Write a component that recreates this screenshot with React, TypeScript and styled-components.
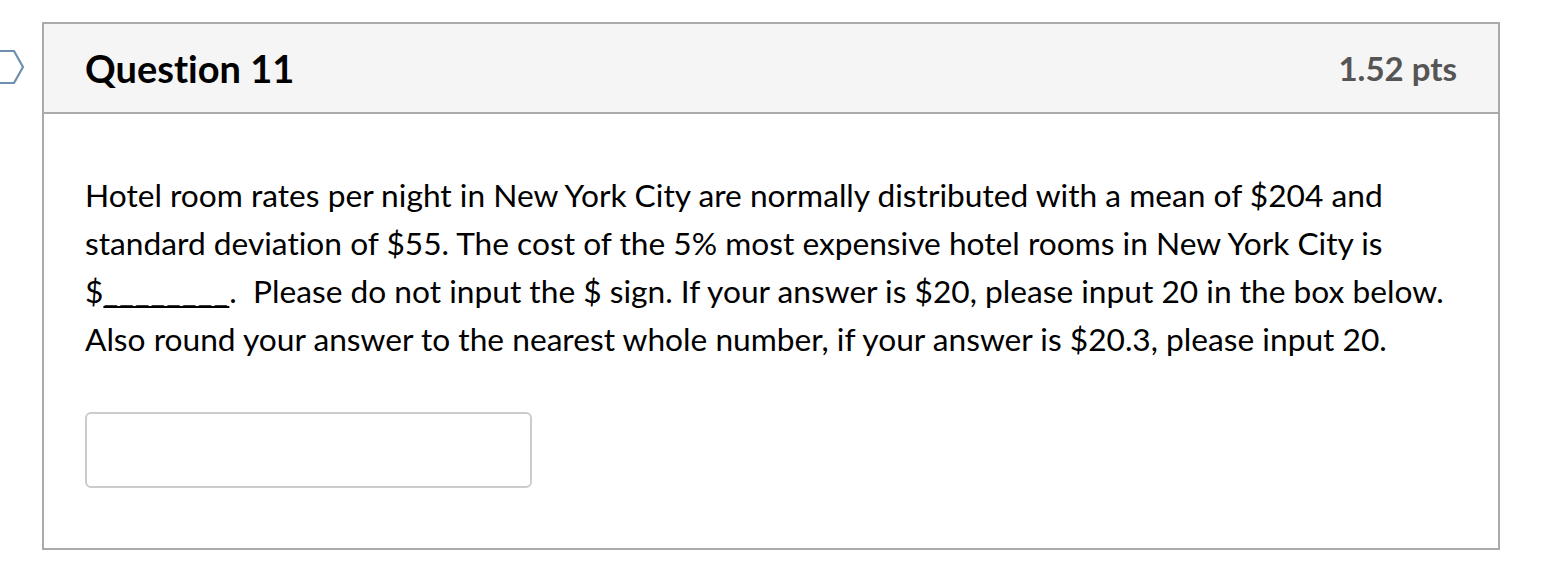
import React from 'react';
import styled, { createGlobalStyle } from 'styled-components';

const GlobalStyle = createGlobalStyle`
    body {
        margin: 0;
        background: #fff;
        font-family: Lato, "Liberation Sans", sans-serif;
        font-variant-ligatures: no-common-ligatures;
        color: #000;
    }
`;

const Page = styled.div`
    display: flex;
    align-items: flex-start;
    padding-top: 22px;
`;

const BookmarkColumn = styled.div`
    width: 42px;
    flex-shrink: 0;
    padding-top: 28px;
    display: flex;
`;

const QuestionCard = styled.div`
    width: 1454px;
    border: 2px solid #aaa;
    background: #fff;
`;

const Header = styled.div`
    display: flex;
    align-items: center;
    justify-content: space-between;
    height: 88px;
    padding: 0 41px 0 41px;
    background: #f5f5f5;
    border-bottom: 2px solid #aaa;
`;

const Title = styled.h2`
    margin: 0;
    font-size: 38px;
    font-weight: 700;
    color: #000;
`;

const Points = styled.span`
    font-size: 33px;
    font-weight: 700;
    color: #555;
`;

const Body = styled.div`
    padding: 57px 41px 60px 41px;
`;

const QuestionText = styled.p`
    margin: 0;
    font-size: 31.7px;
    line-height: 48px;
    color: #000;
`;

const Blank = styled.span`
    letter-spacing: 1.2px;
    text-decoration: underline;
    text-decoration-thickness: 2px;
    text-underline-offset: 3px;
`;

const AnswerInput = styled.input`
    display: block;
    box-sizing: border-box;
    margin-top: 49px;
    width: 447px;
    height: 76px;
    border: 2px solid #ccc;
    border-radius: 6px;
    background: #fff;
    font-family: inherit;
    font-size: 28px;
    padding: 0 14px;
    outline: none;
`;

const Bookmark = () => (
    <svg width="26" height="36" viewBox="0 0 26 36">
        <path
            d="M-4 1 H14 L23 17 L14 33 H-4"
            fill="#fff"
            stroke="#6f8fae"
            strokeWidth="2.2"
            strokeLinejoin="round"
        />
    </svg>
);

const App = () => {
    return (
        <>
            <GlobalStyle />
            <Page>
                <BookmarkColumn>
                    <Bookmark />
                </BookmarkColumn>
                <QuestionCard>
                    <Header>
                        <Title>Question 11</Title>
                        <Points>1.52 pts</Points>
                    </Header>
                    <Body>
                        <QuestionText>
                            Hotel room rates per night in New York City are normally distributed with a mean of $204 and standard deviation of $55. The cost of the 5% most expensive hotel rooms in New York City is $<Blank>________</Blank>.&nbsp; Please do not input the $ sign. If your answer is $20, please input 20 in the box below. Also round your answer to the nearest whole number, if your answer is $20.3, please input 20.
                        </QuestionText>
                        <AnswerInput type="text" />
                    </Body>
                </QuestionCard>
            </Page>
        </>
    );
};

export default App;
